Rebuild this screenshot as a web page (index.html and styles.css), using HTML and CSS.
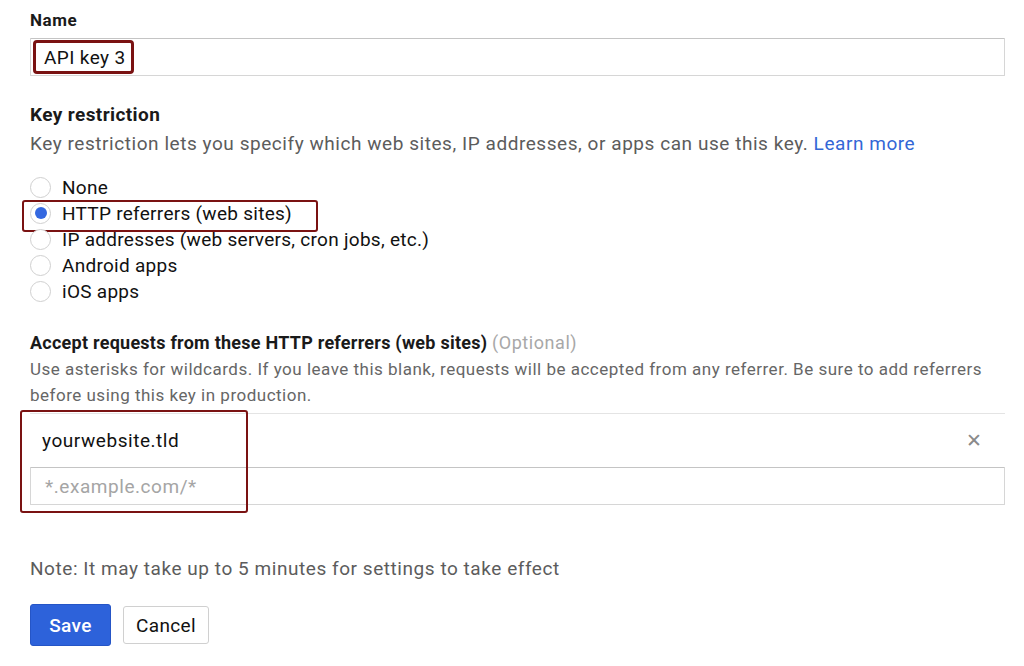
FILE: index.html
```html
<!DOCTYPE html>
<html lang="en">
<head>
<meta charset="utf-8">
<title>API key</title>
<link rel="stylesheet" href="styles.css">
</head>
<body>
<main class="form">
  <div class="label name-label">Name</div>
  <div class="text-input name-input"><span class="name-value">API key 3</span></div>

  <div class="heading">Key restriction</div>
  <p class="desc">Key restriction lets you specify which web sites, IP addresses, or apps can use this key. <a class="link" href="#">Learn more</a></p>

  <div class="radios">
    <div class="radio-row"><span class="radio"></span><span>None</span></div>
    <div class="radio-row marked"><span class="radio checked"></span><span>HTTP referrers (web sites)</span></div>
    <div class="radio-row"><span class="radio"></span><span>IP addresses (web servers, cron jobs, etc.)</span></div>
    <div class="radio-row"><span class="radio"></span><span>Android apps</span></div>
    <div class="radio-row"><span class="radio"></span><span>iOS apps</span></div>
  </div>

  <div class="label accept-label">Accept requests from these HTTP referrers (web sites) <span class="optional">(Optional)</span></div>
  <p class="sub-desc">Use asterisks for wildcards. If you leave this blank, requests will be accepted from any referrer. Be sure to add referrers before using this key in production.</p>

  <div class="referrers">
    <div class="ref-row"><span class="ref-value">yourwebsite.tld</span><span class="remove">&#x2715;</span></div>
    <div class="text-input ref-input"><span class="placeholder">*.example.com/*</span></div>
  </div>

  <p class="note">Note: It may take up to 5 minutes for settings to take effect</p>

  <div class="actions">
    <button class="btn btn-primary">Save</button>
    <button class="btn btn-default">Cancel</button>
  </div>
</main>
</body>
</html>
```

FILE: styles.css
```css
* { box-sizing: border-box; }
html, body { margin: 0; padding: 0; background: #fff; }
body {
  font-family: Roboto, "Liberation Sans", Arial, sans-serif;
  color: #212121;
  font-size: 19px;
  letter-spacing: 0.55px;
}
.form {
  padding: 10px 19px 0 30px;
}
.label {
  font-weight: 700;
  font-size: 18px;
  line-height: 20px;
  letter-spacing: 0.25px;
  color: #1a1a1a;
}
.name-label { font-size: 17px; letter-spacing: 0.6px; margin-bottom: 8px; }
.text-input {
  height: 38px;
  border: 1px solid #d6d6d6;
  border-top-color: #c4c4c4;
  border-radius: 1px;
  display: flex;
  align-items: center;
}
.name-input { padding-left: 2px; }
.name-value {
  display: inline-flex;
  align-items: center;
  height: 34px;
  padding: 0 5px 0 8px;
  border: 3px solid #7a1212;
  border-radius: 4px;
  font-size: 19px;
  letter-spacing: 0.4px;
  color: #111;
}
.heading {
  margin-top: 27px;
  font-weight: 700;
  font-size: 19px;
  letter-spacing: 0.4px;
  line-height: 24px;
  color: #1a1a1a;
}
.desc {
  margin: 4px 0 0;
  line-height: 26px;
  color: #5c5c5c;
}
.link { color: #3367d6; text-decoration: none; }
.radios {
  margin-top: 17px;
  display: flex;
  flex-direction: column;
}
.radio-row {
  position: relative;
  height: 26px;
  display: flex;
  align-items: center;
  gap: 11px;
  letter-spacing: 0.28px;
  color: #111;
  width: fit-content;
}
.radio-row.marked::after {
  content: "";
  position: absolute;
  left: -8px;
  top: 0px;
  width: 292px;
  height: 28px;
  border: 2px solid #7a1212;
  border-radius: 3px;
}
.radio {
  width: 21px;
  height: 21px;
  border-radius: 50%;
  border: 1px solid #d0d0d0;
  background: #fff;
  display: flex;
  align-items: center;
  justify-content: center;
  flex: none;
}
.radio.checked::before {
  content: "";
  width: 12px;
  height: 12px;
  border-radius: 50%;
  background: #3468e0;
}
.accept-label { margin-top: 27px; line-height: 24px; }
.optional { font-weight: 400; color: #a8a8a8; letter-spacing: 0.55px; }
.sub-desc {
  margin: 1px 0 0;
  font-size: 17px;
  letter-spacing: 0.5px;
  line-height: 26px;
  color: #666;
}
.referrers {
  position: relative;
  margin-top: 5px;
  border-top: 1px solid #e4e4e4;
}
.referrers::after {
  content: "";
  position: absolute;
  left: -10px;
  top: -4px;
  width: 224px;
  height: 99px;
  border: 2px solid #7a1212;
  border-radius: 3px;
}
.ref-row {
  height: 53px;
  display: flex;
  align-items: center;
  justify-content: space-between;
  padding: 0 23px 0 12px;
}
.ref-value { color: #111; }
.remove { font-size: 19px; color: #8a8a8a; letter-spacing: 0; }
.ref-input { padding-left: 14px; height: 38px; }
.placeholder { color: #a5a5a5; }
.note {
  margin: 51px 0 0;
  line-height: 26px;
  color: #5c5c5c;
}
.actions {
  margin-top: 22px;
  display: flex;
  align-items: center;
  gap: 12px;
}
.btn {
  font-family: inherit;
  font-size: 19px;
  letter-spacing: 0.4px;
  border-radius: 3px;
  cursor: pointer;
  padding: 0;
}
.btn-primary {
  width: 81px;
  height: 42px;
  background: #2d62da;
  border: 1px solid #2555c6;
  color: #fff;
  font-weight: 500;
}
.btn-default {
  width: 86px;
  height: 38px;
  background: #fff;
  border: 1px solid #d0d0d0;
  color: #111;
}
```
